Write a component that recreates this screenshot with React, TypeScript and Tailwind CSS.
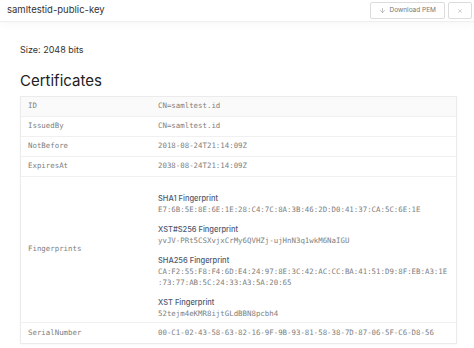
import { ArrowDown, X } from 'lucide-react'

const rows = [
  { key: 'ID', value: 'CN=samltest.id' },
  { key: 'IssuedBy', value: 'CN=samltest.id' },
  { key: 'NotBefore', value: '2018-08-24T21:14:09Z' },
  { key: 'ExpiresAt', value: '2038-08-24T21:14:09Z' },
]

const fingerprints = [
  { label: 'SHA1 Fingerprint', lines: ['E7:6B:5E:8E:6E:1E:28:C4:7C:8A:3B:46:2D:D0:41:37:CA:5C:6E:1E'] },
  { label: 'XST#S256 Fingerprint', lines: ['yvJV-PRt5CSXvjxCrMy6QVHZj-ujHnN3q1wkM6NaIGU'] },
  {
    label: 'SHA256 Fingerprint',
    lines: ['CA:F2:55:F8:F4:6D:E4:24:97:8E:3C:42:AC:CC:BA:41:51:D9:8F:EB:A3:1E', ':73:77:AB:5C:24:33:A3:5A:20:65'],
  },
  { label: 'XST Fingerprint', lines: ['52tejm4eKMR8ijtGLdBBN8pcbh4'] },
]

const mono = "font-['DejaVu_Sans_Mono',monospace] text-[7.4px] text-[#808080] whitespace-nowrap"

export default function App() {
  return (
    <div className="h-[348px] w-[474px] overflow-hidden bg-white font-['Inter',sans-serif]">
      {/* Header */}
      <div className="flex h-[22px] items-center justify-between border-b border-[#eeeeee] pl-[7px] pr-[2px] shadow-[0_3px_8px_rgba(0,0,0,0.03)]">
        <span className="text-[9.5px] text-[#333]">samltestid-public-key</span>
        <div className="flex items-center gap-[3px]">
          <button className="flex h-[17px] items-center gap-[3px] rounded-[2px] border border-[#dcdcdc] px-[8px] text-[6.5px] text-[#777]">
            <ArrowDown className="h-[7px] w-[7px]" strokeWidth={1.5} />
            Download PEM
          </button>
          <button className="flex h-[17px] w-[24px] items-center justify-center rounded-[2px] border border-[#dcdcdc] text-[#888]">
            <X className="h-[6px] w-[6px]" strokeWidth={1.5} />
          </button>
        </div>
      </div>

      <div className="px-[20px]">
        <div className="pt-[21px] text-[9px] text-[#333]">Size: 2048 bits</div>
        <h2 className="mt-[15px] text-[15px] leading-[18px] text-[#222]">Certificates</h2>

        <div className="mt-[6px] w-[437px] border border-[#ebebeb] shadow-[0_1px_3px_rgba(0,0,0,0.04)]">
          {rows.map((r, i) => (
            <div
              key={r.key}
              className={`flex h-[20px] items-center border-b border-[#f0f0f0] ${i === 0 ? 'bg-[#fafafa]' : 'bg-white'}`}
            >
              <div className={`w-[137px] shrink-0 pl-[7px] ${mono}`}>{r.key}</div>
              <div className={mono}>{r.value}</div>
            </div>
          ))}

          <div className="flex items-center border-b border-[#f0f0f0]">
            <div className={`w-[137px] shrink-0 pl-[7px] ${mono}`}>Fingerprints</div>
            <div className="flex flex-col gap-[9px] pb-[3px] pt-[16px]">
              {fingerprints.map((f) => (
                <div key={f.label} className="flex flex-col">
                  <span className="text-[7.5px] leading-[11px] font-medium text-[#505870]">{f.label}</span>
                  {f.lines.map((line) => (
                    <span key={line} className={`${mono} leading-[11px]`}>
                      {line}
                    </span>
                  ))}
                </div>
              ))}
            </div>
          </div>

          <div className="flex h-[20px] items-center">
            <div className={`w-[137px] shrink-0 pl-[7px] ${mono}`}>SerialNumber</div>
            <div className={mono}>00-C1-02-43-58-63-82-16-9F-9B-93-81-58-38-7D-87-06-5F-C6-D8-56</div>
          </div>
        </div>
      </div>
    </div>
  )
}
